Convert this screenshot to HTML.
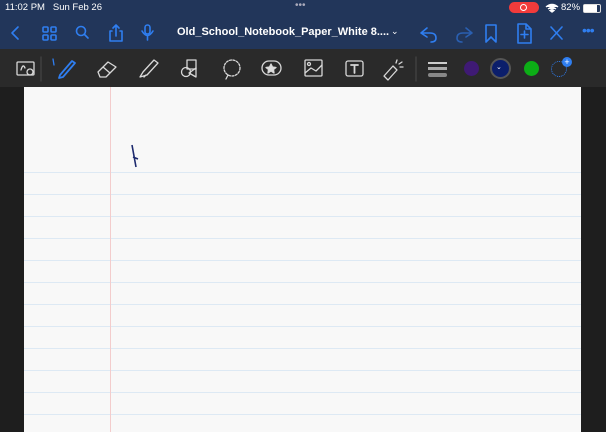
<!DOCTYPE html>
<html><head><style>
body{margin:0;width:606px;height:432px;overflow:hidden;background:#1e1e1e;font-family:"Liberation Sans",sans-serif;position:relative}
.hdr{position:absolute;left:0;top:0;width:606px;height:49px;background:#22365a}
.tb{position:absolute;left:0;top:49px;width:606px;height:38px;background:#2a2a2a}
.paper{position:absolute;left:24px;top:87px;width:557px;height:345px;background:#f8f8f8}
.hl{position:absolute;left:24px;width:557px;height:1px;background:#dde9f4}
.margin{position:absolute;left:110px;top:87px;width:1px;height:345px;background:#f3cccc}
.t{position:absolute;color:#fff;font-size:10px}
svg{position:absolute}
</style></head><body>
<div class="hdr"></div>
<div class="tb"></div>
<div class="paper"></div>
<div class="hl" style="top:172px"></div><div class="hl" style="top:194px"></div><div class="hl" style="top:216px"></div><div class="hl" style="top:238px"></div><div class="hl" style="top:260px"></div><div class="hl" style="top:282px"></div><div class="hl" style="top:304px"></div><div class="hl" style="top:326px"></div><div class="hl" style="top:348px"></div><div class="hl" style="top:370px"></div><div class="hl" style="top:392px"></div><div class="hl" style="top:414px"></div>
<div class="margin"></div>
<svg style="left:128px;top:142px" width="14" height="28"><path d="M4 3 L6 14 L8 25 M5 15 L10 17" stroke="#1d2a6e" stroke-width="1.6" fill="none"/></svg>

<div class="t" style="left:5px;top:2px;font-size:9.5px">11:02 PM&nbsp;&nbsp;&nbsp;Sun Feb 26</div>
<div class="t" style="left:295px;top:0px;font-size:10px;color:#aab">•••</div>
<div style="position:absolute;left:509px;top:2px;width:30px;height:11px;border-radius:6px;background:#f23b3b"></div>
<div style="position:absolute;left:520px;top:4px;width:5px;height:5px;border:1.5px solid #fff;border-radius:50%"></div>
<div class="t" style="left:561px;top:2px;font-size:9.5px">82%</div>
<div style="position:absolute;left:583px;top:4px;width:16px;height:7px;border:1px solid #ddd;border-radius:2px"><div style="width:13px;height:7px;background:#fff"></div></div>
<svg style="left:545px;top:3px" width="14" height="10"><path d="M1 4 Q7 -1 13 4 M3 6 Q7 3 11 6 M7 9 L5 7.5 Q7 6 9 7.5Z" stroke="#fff" stroke-width="1.4" fill="#fff"/></svg>

<div class="t" style="left:177px;top:26px;font-size:11px;font-weight:bold">Old_School_Notebook_Paper_White 8....</div>
<div class="t" style="left:391px;top:26px;font-size:9px">⌄</div>
<svg style="left:0;top:20px" width="606" height="28" fill="none" stroke="#2f7ef0" stroke-width="1.6" stroke-linecap="round" stroke-linejoin="round">
<path d="M18 7 L12 13 L18 19"/>
<rect x="43" y="7" width="5" height="5" rx="1"/><rect x="51" y="7" width="5" height="5" rx="1"/><rect x="43" y="15" width="5" height="5" rx="1"/><rect x="51" y="15" width="5" height="5" rx="1"/>
<circle cx="81" cy="11" r="4.5"/><path d="M84.5 14.5 L88 18"/>
<path d="M112 11 L110 11 L110 21 L122 21 L122 11 L120 11 M116 16 L116 5 M113 8 L116 5 L119 8"/>
<rect x="145" y="5" width="5" height="9" rx="2.5"/><path d="M142 11 Q147.5 20 153 11 M147.5 16 L147.5 20"/>
<path d="M427 8 L421 13 L427 17 M421 13 L430 13 Q436 13 436 18 Q436 22 431 22"/>
<path d="M466 8 L472 13 L466 17 M472 13 L463 13 Q457 13 457 18 Q457 22 462 22" stroke="#2a5fb0"/>
<path d="M486 5 L496 5 L496 22 L491 17 L486 22 Z"/>
<path d="M518 4 L526 4 L531 9 L531 23 L518 23 Z M526 4 L526 9 L531 9 M524.5 11 L524.5 18 M521 14.5 L528 14.5"/>
<path d="M551 7 L562 19 M562 7 L551 19"/>
</svg>
<div class="t" style="left:582px;top:22px;font-size:14px;color:#2f7ef0;letter-spacing:-1px">•••</div>

<svg style="left:0;top:49px" width="606" height="38" fill="none" stroke="#d8d8d8" stroke-width="1.3" stroke-linecap="round" stroke-linejoin="round">
<rect x="17" y="13" width="17" height="13" rx="1"/><circle cx="30" cy="23" r="3"/><path d="M21 21 Q23 14 25 19"/>
<line x1="41" y1="8" x2="41" y2="32" stroke="#444"/>
<path d="M60 26 L72 12 L75 14 L63 28 L59 29 Z" stroke="#2f7ef0" stroke-width="1.8"/>
<path d="M53 10 L54 16" stroke="#2f7ef0"/>
<path d="M98 23 L108 13 L116 18 L106 28 L100 28 Z M103 18 L110 24"/>
<path d="M140 28 L143 23 L154 11 L158 14 L147 26 Z M144 28 L146 26"/>
<rect x="187" y="11" width="9" height="9"/><circle cx="186" cy="23" r="4.5"/><path d="M196 19 L196 28 L189 24 Z"/>
<circle cx="232" cy="19" r="8" stroke-dasharray="2 1.5"/><path d="M228 26 L226 30"/>
<rect x="262" y="12" width="19" height="14" rx="7"/><path d="M271 15 L272.5 18 L276 18.5 L273.5 20.5 L274 24 L271 22 L268 24 L268.5 20.5 L266 18.5 L269.5 18Z" fill="#ddd"/>
<rect x="305" y="11" width="17" height="16" rx="1"/><path d="M305 24 L311 19 L316 22 L322 16"/><circle cx="309" cy="15" r="1.5"/>
<rect x="346" y="12" width="17" height="15" rx="2"/><path d="M351 16 L358 16 M354.5 16 L354.5 24" stroke-width="1.8"/>
<path d="M388 31 L384 27 L393 17 L397 21 Z M396 14 L397 11 M399 15 L402 13 M400 18 L403 18"/>
<line x1="416" y1="8" x2="416" y2="32" stroke="#444"/>
</svg>
<div style="position:absolute;left:428px;top:62px;width:19px;height:2px;background:#ccc"></div>
<div style="position:absolute;left:428px;top:67px;width:19px;height:3px;background:#aaa"></div>
<div style="position:absolute;left:428px;top:73px;width:19px;height:4px;border-radius:2px;background:#888"></div>
<div style="position:absolute;left:464px;top:61px;width:15px;height:15px;border-radius:50%;background:#3f1a74"></div>
<div style="position:absolute;left:490px;top:58px;width:17px;height:17px;border-radius:50%;background:#0b1e6b;border:2.5px solid #555"></div>
<div class="t" style="left:496px;top:63px;font-size:7px">⌄</div>
<div style="position:absolute;left:524px;top:61px;width:15px;height:15px;border-radius:50%;background:#0cad16"></div>
<div style="position:absolute;left:551px;top:61px;width:14px;height:14px;border-radius:50%;border:1.5px dotted #2f7ef0"></div>
<div style="position:absolute;left:562px;top:57px;width:10px;height:10px;border-radius:50%;background:#2f7ef0;color:#fff;font-size:9px;line-height:10px;text-align:center">+</div>
</body></html>
